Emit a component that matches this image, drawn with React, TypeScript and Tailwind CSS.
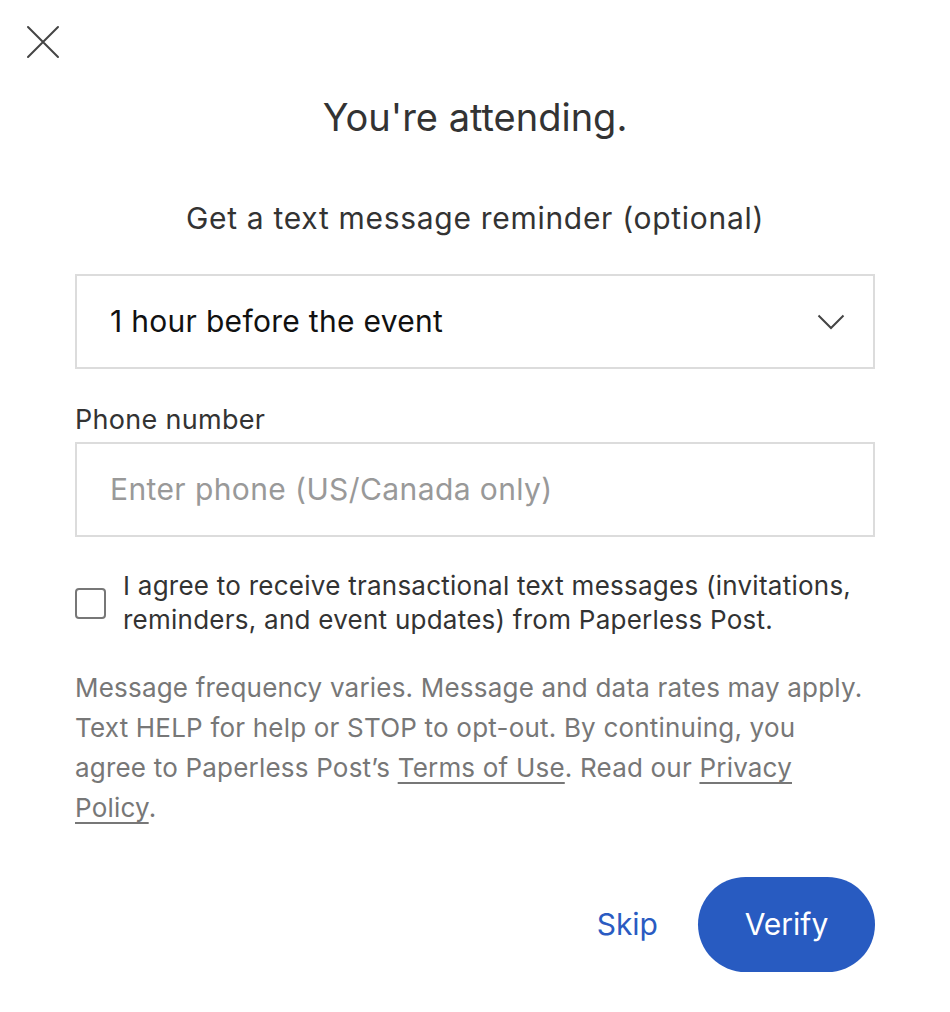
import React from 'react'

const inter = { fontFamily: 'Inter, "Liberation Sans", Arial, sans-serif' }

export default function App() {
  return (
    <div className="w-[950px] h-[1012px] bg-white relative" style={inter}>
      <button className="absolute left-[26px] top-[25px] w-[34px] h-[34px]" aria-label="Close">
        <svg width="34" height="34" viewBox="0 0 34 34" fill="none">
          <path d="M2 2L32 32M32 2L2 32" stroke="#444" strokeWidth="2" strokeLinecap="round" />
        </svg>
      </button>

      <div className="px-[75px] pt-[94px]">
        <h1 className="text-center text-[38px] leading-[46px] text-[#333]">You're attending.</h1>
        <p className="mt-[61px] text-center text-[30px] leading-[34px] tracking-[0.7px] text-[#333]">
          Get a text message reminder (optional)
        </p>

        <div className="mt-[39px] h-[95px] border-2 border-[#dcdcdc] flex items-center justify-between pl-[33px] pr-[28px]">
          <span className="text-[30px] tracking-[0.3px] text-[#111]">1 hour before the event</span>
          <svg width="28" height="16" viewBox="0 0 28 16" fill="none">
            <path d="M1.5 1.5L14 14L26.5 1.5" stroke="#444" strokeWidth="2" />
          </svg>
        </div>

        <label className="block mt-[36px] text-[27px] leading-[30px] tracking-[0.3px] text-[#333]">Phone number</label>
        <div className="mt-[7px] h-[95px] border-2 border-[#dcdcdc] flex items-center pl-[33px]">
          <span className="text-[30px] tracking-[0.4px] text-[#999]">Enter phone (US/Canada only)</span>
        </div>

        <div className="mt-[32px] flex items-center gap-[17px]">
          <div className="w-[31px] h-[31px] border-2 border-[#777] rounded-[4px] shrink-0" />
          <p className="text-[26px] leading-[34px] tracking-[0.25px] text-[#333]">
            I agree to receive transactional text messages (invitations, reminders, and event updates) from Paperless Post.
          </p>
        </div>

        <p className="mt-[31px] text-[26px] leading-[40px] tracking-[0.2px] text-[#777] pr-[10px]">
          Message frequency varies. Message and data rates may apply. Text HELP for help or STOP to opt-out. By continuing, you agree to Paperless Post’s{' '}
          <span className="underline underline-offset-[5px]">Terms of Use</span>. Read our{' '}
          <span className="underline underline-offset-[5px]">Privacy Policy</span>.
        </p>

        <div className="mt-[49px] flex items-center justify-end gap-[40px]">
          <span className="text-[30px] text-[#2a5bc2]">Skip</span>
          <button className="w-[177px] h-[95px] rounded-full bg-[#285bc1] text-white text-[30px]">Verify</button>
        </div>
      </div>
    </div>
  )
}
